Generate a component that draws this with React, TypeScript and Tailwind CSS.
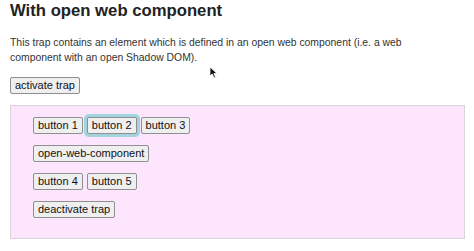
import React from 'react';

const Btn: React.FC<{ label: string; focused?: boolean }> = ({ label, focused }) => (
  <button
    className={`h-[17px] px-[4px] text-[11px] leading-[13px] text-[#111] bg-[#efefef] border border-[#8f8f8f] rounded-[2px] ${
      focused ? 'shadow-[0_0_0_3px_#a3d3df]' : ''
    }`}
  >
    {label}
  </button>
);

const App: React.FC = () => {
  return (
    <div className="relative w-[474px] h-[251px] bg-white px-[10px] font-['Liberation_Sans',Arial,sans-serif] text-[#333]">
      <h2 className="text-[16.7px] leading-[22px] font-bold text-[#222]">With open web component</h2>

      <p className="mt-[13px] text-[10.4px] leading-[15px] pr-[20px]">
        This trap contains an element which is defined in an open web component (i.e. a web component with an
        open Shadow DOM).
      </p>

      <div className="mt-[12px] flex">
        <Btn label="activate trap" />
      </div>

      <div className="mt-[11px] w-[455px] h-[134px] bg-[#fde6fd] border border-[#dcd3dc] pl-[22px] pt-[11px] flex flex-col items-start gap-[11px]">
        <div className="flex gap-[4px]">
          <Btn label="button 1" />
          <Btn label="button 2" focused />
          <Btn label="button 3" />
        </div>
        <Btn label="open-web-component" />
        <div className="flex gap-[4px]">
          <Btn label="button 4" />
          <Btn label="button 5" />
        </div>
        <Btn label="deactivate trap" />
      </div>

      {/* mouse pointer */}
      <svg className="absolute left-[209px] top-[66px]" width="9" height="13" viewBox="0 0 9 13">
        <path d="M1 1 L1 10 L3.3 8 L5 12 L6.5 11.3 L4.9 7.5 L8 7.5 Z" fill="#111" stroke="#fff" strokeWidth="0.8" />
      </svg>
    </div>
  );
};

export default App;
